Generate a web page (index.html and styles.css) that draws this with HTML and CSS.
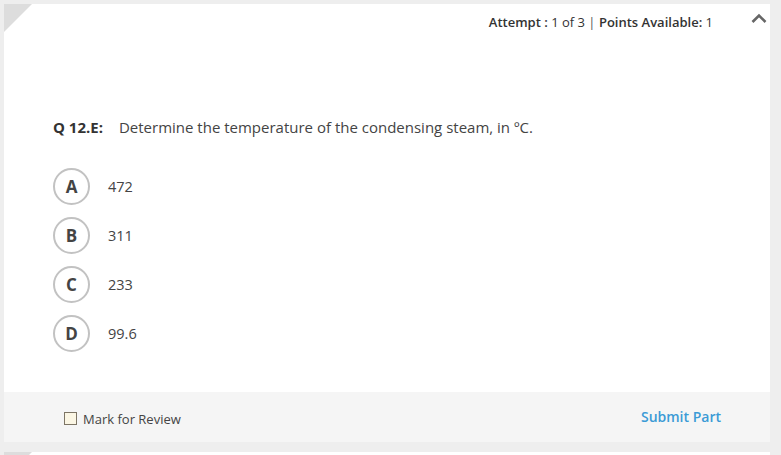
FILE: index.html
```html
<!DOCTYPE html>
<html>
<head>
<meta charset="utf-8">
<link rel="stylesheet" href="styles.css">
</head>
<body>
<div class="card">
  <div class="corner"></div>
  <div class="top">
    <div class="meta"><b>Attempt :</b> 1 of 3 <span class="sep">|</span> <b>Points Available:</b> 1</div>
    <svg class="chev" width="16" height="12" viewBox="0 0 16 12"><path d="M1.5 10 L8 3.5 L14.5 10" fill="none" stroke="#666" stroke-width="2.6"/></svg>
  </div>
  <div class="question"><span class="qnum">Q 12.E:</span><span class="qtext">Determine the temperature of the condensing steam, in ºC.</span></div>
  <div class="options">
    <div class="opt"><span class="letter">A</span><span class="val">472</span></div>
    <div class="opt"><span class="letter">B</span><span class="val">311</span></div>
    <div class="opt"><span class="letter">C</span><span class="val">233</span></div>
    <div class="opt"><span class="letter">D</span><span class="val">99.6</span></div>
  </div>
  <div class="footer">
    <label class="review"><span class="box"></span>Mark for Review</label>
    <span class="submit">Submit Part</span>
  </div>
</div>
<div class="card next"><div class="corner"></div></div>
</body>
</html>
```
FILE: styles.css
```css
html, body { margin: 0; padding: 0; }
body {
  background: #eeeeee;
  font-family: "Open Sans", "Liberation Sans", sans-serif;
  color: #444;
  padding: 4px 11px 0 4px;
  overflow: hidden;
  height: 455px;
  box-sizing: border-box;
}
.card {
  background: #fff;
  position: relative;
  width: 766px;
}
.corner {
  position: absolute;
  left: 0; top: 0;
  width: 0; height: 0;
  border-top: 28px solid #dddddd;
  border-right: 28px solid transparent;
}
.top {
  display: flex;
  justify-content: flex-end;
  align-items: center;
  height: 34px;
  padding-right: 3px;
}
.meta {
  font-size: 13px;
  color: #333;
  margin-right: 38px;
  margin-top: 2px;
}
.meta b { font-weight: 600; }
.sep { color: #555; }
.chev { margin-top: -6px; }
.question {
  margin: 78px 0 0 49px;
  font-size: 15px;
  line-height: 22px;
  color: #444;
}
.qnum { font-weight: 700; color: #333; margin-right: 16px; }
.options {
  margin: 30px 0 0 49px;
  display: flex;
  flex-direction: column;
  gap: 12px;
}
.opt { display: flex; align-items: center; }
.letter {
  width: 33px; height: 33px;
  border: 2px solid #c2c2c2;
  border-radius: 50%;
  display: flex; align-items: center; justify-content: center;
  font-weight: 700;
  font-size: 17px;
  color: #444;
}
.val { margin-left: 18px; font-size: 14.5px; color: #444; }
.footer {
  margin-top: 40px;
  height: 50px;
  background: #f5f5f5;
  display: flex;
  align-items: center;
  justify-content: space-between;
  padding: 0 49px 0 60px;
}
.review {
  display: flex; align-items: center;
  font-size: 13px; color: #444;
  margin-top: 3px;
}
.box {
  width: 11px; height: 11px;
  border: 1px solid #7d7565;
  background: #fbf6e4;
  margin-right: 6px;
}
.submit {
  color: #3b9bd6;
  font-weight: 600;
  font-size: 14px;
  margin-top: -2px;
}
.next { margin-top: 10px; height: 3px; overflow: hidden; }
```
